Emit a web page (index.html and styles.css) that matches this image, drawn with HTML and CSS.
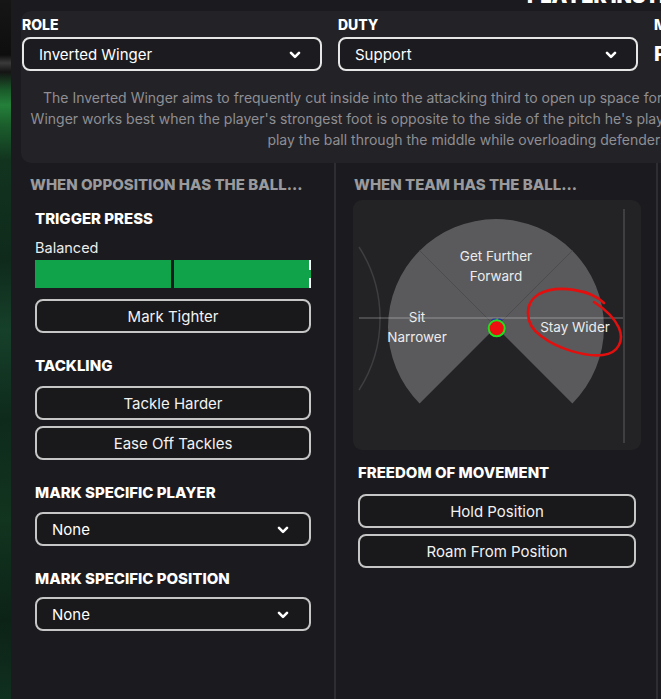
FILE: index.html
```html
<!DOCTYPE html>
<html lang="en">
<head>
<meta charset="utf-8">
<title>Player Instructions</title>
<link rel="stylesheet" href="styles.css">
</head>
<body>
<div class="app">
  <div class="backdrop"></div>
  <div class="main">
    <div class="titlebar"><h1 class="title">PLAYER INSTRUCTIONS</h1></div>

    <section class="role-panel">
      <div class="fields">
        <div class="field">
          <div class="label">ROLE</div>
          <div class="select"><span>Inverted Winger</span><svg class="chev" viewBox="0 0 12 8"><path d="M2 1.8 L6 5.8 L10 1.8"/></svg></div>
        </div>
        <div class="field">
          <div class="label">DUTY</div>
          <div class="select"><span>Support</span><svg class="chev" viewBox="0 0 12 8"><path d="M2 1.8 L6 5.8 L10 1.8"/></svg></div>
        </div>
        <div class="field">
          <div class="label">MENTALITY</div>
          <div class="value">Positive</div>
        </div>
      </div>
      <p class="desc">The Inverted Winger aims to frequently cut inside into the attacking third to open up space for overlapping full backs. An Inverted<br>Winger works best when the player's strongest foot is opposite to the side of the pitch he's playing on, allowing him to cut inside and<br>play the ball through the middle while overloading defenders.</p>
    </section>

    <div class="columns">
      <div class="col col-left">
        <div class="heading-muted">WHEN OPPOSITION HAS THE BALL...</div>

        <div class="group first">
          <div class="sec-title">TRIGGER PRESS</div>
          <div class="level">Balanced</div>
          <div class="bar">
            <div class="seg seg-a"></div>
            <div class="seg seg-b"></div>
            <div class="marker"></div>
          </div>
          <div class="btn btn-after">Mark Tighter</div>
        </div>

        <div class="group">
          <div class="sec-title">TACKLING</div>
          <div class="btn btn-after">Tackle Harder</div>
          <div class="btn btn-next">Ease Off Tackles</div>
        </div>

        <div class="group">
          <div class="sec-title">MARK SPECIFIC PLAYER</div>
          <div class="select select-after"><span>None</span><svg class="chev" viewBox="0 0 12 8"><path d="M2 1.8 L6 5.8 L10 1.8"/></svg></div>
        </div>

        <div class="group">
          <div class="sec-title">MARK SPECIFIC POSITION</div>
          <div class="select select-after2"><span>None</span><svg class="chev" viewBox="0 0 12 8"><path d="M2 1.8 L6 5.8 L10 1.8"/></svg></div>
        </div>
      </div>

      <div class="col col-right">
        <div class="heading-muted heading-right">WHEN TEAM HAS THE BALL...</div>
        <div class="pitch">
          <svg class="pitch-svg" viewBox="0 0 288 250" width="288" height="250">
            <path class="sector" d="M143 127 L66.6 203.4 A108 108 0 1 1 219.4 203.4 Z"/>
            <path class="divider" d="M143 127 L66.6 50.6 M143 127 L219.4 50.6"/>
            <path class="arc" d="M6 47 A132 132 0 0 1 6 190"/>
            <line class="hline" x1="6" y1="118" x2="270" y2="118"/>
            <line class="vline" x1="271" y1="9" x2="271" y2="243"/>
            <path class="arrow" d="M138.5 120.5 Q141 118.6 143.5 119.5 M145 119.5 Q147.5 118.6 149.5 120.5"/>
            <circle class="ball" cx="143.7" cy="128.3" r="8"/>
            <text class="zone" x="143" y="61">Get Further</text>
            <text class="zone" x="143" y="81">Forward</text>
            <text class="zone" x="64" y="122">Sit</text>
            <text class="zone" x="64" y="142">Narrower</text>
            <text class="zone" x="222" y="132">Stay Wider</text>
            <path class="scribble" d="M251 103 C238 90 205 84 186 94 C171 103 171 124 188 136 C205 149 232 157 250 155 C266 153 271 140 266 128 C261 117 252 109 241 102"/>
          </svg>
        </div>
        <div class="freedom">
          <div class="sec-title">FREEDOM OF MOVEMENT</div>
          <div class="btn btn-after2">Hold Position</div>
          <div class="btn btn-next">Roam From Position</div>
        </div>
      </div>
    </div>
  </div>
</div>
</body>
</html>
```

FILE: styles.css
```css
html, body {
  margin: 0;
  padding: 0;
}

body {
  width: 661px;
  height: 699px;
  overflow: hidden;
  background: #1b1a1e;
  font-family: Inter, Roboto, "Liberation Sans", Arial, sans-serif;
  color: #ffffff;
}

.app {
  display: flex;
  height: 699px;
}

.backdrop {
  flex: none;
  width: 11px;
  background: linear-gradient(to bottom,
    #161616 0px, #0e0e0e 55px, #3a3a3a 63px, #141414 72px,
    #1a5a2a 90px, #24803a 105px, #1b5e2c 125px, #12341f 160px,
    #0f2a1b 260px, #16402a 330px, #0e2a1b 420px, #12351f 520px,
    #0c2217 620px, #10301f 699px);
}

.main {
  flex: none;
  width: 650px;
  overflow: hidden;
  background: #1b1a1e;
}

.titlebar {
  height: 11px;
  display: flex;
  align-items: flex-end;
  padding-left: 516px;
  overflow: hidden;
}

.title {
  margin: 0 0 5px 0;
  font-size: 20px;
  line-height: 20px;
  font-weight: 900;
  white-space: nowrap;
  color: #ffffff;
}

.role-panel {
  margin-left: 10px;
  width: 960px;
  background: #232227;
  border-radius: 10px;
  padding: 6px 0 13px 1px;
}

.fields {
  display: grid;
  grid-template-columns: 300px 300px 300px;
  column-gap: 16px;
}

.label {
  font-size: 14px;
  line-height: 16px;
  font-weight: 800;
  margin-bottom: 4px;
  color: #ffffff;
}

.select {
  height: 34px;
  box-sizing: border-box;
  border: 2px solid #e6e6e6;
  border-radius: 8px;
  display: flex;
  align-items: center;
  justify-content: space-between;
  padding: 1px 19px 0 15px;
  font-size: 15px;
  color: #ffffff;
  background: #1c1b1f;
}

.chev {
  width: 12px;
  height: 8px;
  fill: none;
  stroke: #ffffff;
  stroke-width: 2.6;
  stroke-linecap: round;
  stroke-linejoin: round;
}

.value {
  font-size: 20px;
  line-height: 34px;
  font-weight: 800;
}

.desc {
  margin: 16px 0 0 0;
  width: 895px;
  text-align: center;
  font-size: 14px;
  line-height: 21px;
  color: #8f8f93;
  white-space: nowrap;
}

.columns {
  display: flex;
  height: 536px;
}

.col {
  box-sizing: border-box;
  height: 536px;
  border-right: 2px solid #2e2d31;
  padding-top: 13px;
}

.col-left {
  width: 325px;
  padding-left: 24px;
  padding-right: 23px;
}

.col-right {
  width: 322px;
  padding-left: 17px;
}

.heading-muted {
  font-size: 15px;
  line-height: 18px;
  font-weight: 800;
  color: #9a9a9d;
  white-space: nowrap;
  margin-left: -5px;
}

.heading-right {
  margin-left: 1px;
}

.sec-title {
  font-size: 15px;
  line-height: 18px;
  font-weight: 800;
  color: #ffffff;
  white-space: nowrap;
}

.group {
  margin-top: 24px;
}

.group.first {
  margin-top: 16px;
}

.level {
  margin-top: 11px;
  font-size: 14.5px;
  line-height: 18px;
  color: #ececec;
}

.bar {
  margin-top: 3px;
  height: 28px;
  display: flex;
  gap: 3px;
}

.seg {
  background: #10a34a;
  height: 28px;
}

.seg-a {
  width: 136px;
}

.seg-b {
  flex: 1;
  margin-right: -3px;
}

.marker {
  width: 2px;
  height: 28px;
  background: linear-gradient(to bottom, #ffffff 0 10px, #10a34a 10px 18px, #ffffff 18px 28px);
}

.btn {
  height: 34px;
  box-sizing: border-box;
  border: 2px solid #c6c6c6;
  border-radius: 8px;
  display: flex;
  align-items: center;
  justify-content: center;
  padding-top: 1px;
  font-size: 15px;
  color: #f2f2f2;
  background: #19181b;
}

.btn-after {
  margin-top: 11px;
}

.btn-after2 {
  margin-top: 12px;
}

.btn-next {
  margin-top: 6px;
}

.select-after {
  margin-top: 10px;
  border-color: #c6c6c6;
  background: #19181b;
  padding-right: 20px;
}

.select-after2 {
  margin-top: 9px;
  border-color: #c6c6c6;
  background: #19181b;
  padding-right: 20px;
}

.pitch {
  margin-top: 6px;
  width: 288px;
  height: 250px;
  background: #232326;
  border-radius: 9px;
  overflow: hidden;
}

.pitch-svg {
  display: block;
}

.sector {
  fill: #5a5a5c;
}

.divider {
  stroke: #4c4c4e;
  stroke-width: 1;
  fill: none;
}

.arc {
  fill: none;
  stroke: #3e3e41;
  stroke-width: 1.5;
}

.hline {
  stroke: rgba(255, 255, 255, 0.18);
  stroke-width: 2;
}

.vline {
  stroke: #4a4a4d;
  stroke-width: 1.5;
}

.arrow {
  fill: none;
  stroke: #1f2fa8;
  stroke-width: 1.5;
}

.ball {
  fill: #ee1010;
  stroke: #22dd22;
  stroke-width: 2;
}

.zone {
  font-family: Inter, Roboto, "Liberation Sans", Arial, sans-serif;
  font-size: 13.5px;
  fill: #ececec;
  text-anchor: middle;
}

.scribble {
  fill: none;
  stroke: #e20f0f;
  stroke-width: 2.6;
  stroke-linecap: round;
  stroke-linejoin: round;
}

.freedom {
  margin-left: 5px;
  width: 278px;
  margin-top: 14px;
}
```
